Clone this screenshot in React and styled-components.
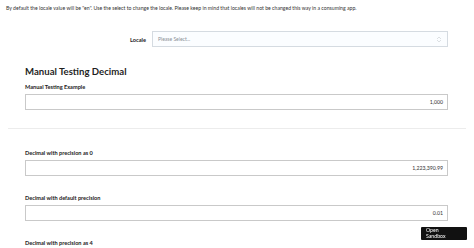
import React from 'react';
import styled, { createGlobalStyle } from 'styled-components';

const GlobalStyle = createGlobalStyle`
  html, body {
    margin: 0;
    padding: 0;
    background: #ffffff;
  }

  body {
    font-family: Lato, 'Open Sans', sans-serif;
    color: #2b2b2b;
  }
`;

const Page = styled.div`
  width: 474px;
  min-height: 248px;
`;

const Intro = styled.p`
  margin: 0;
  padding: 5px 6px 0;
  font-size: 5.15px;
  line-height: 7px;
  color: #333;
`;

const Content = styled.div`
  padding: 0 26px 0 25px;
`;

const LocaleRow = styled.div`
  display: flex;
  justify-content: flex-end;
  align-items: center;
  gap: 6px;
  margin-top: 19px;
`;

const LocaleLabel = styled.label`
  font-size: 5.6px;
  font-weight: 700;
  color: #222;
`;

const Select = styled.div`
  box-sizing: border-box;
  width: 296px;
  height: 16px;
  display: flex;
  align-items: center;
  justify-content: space-between;
  padding: 0 5px;
  border: 1px solid #d5dbe1;
  background: #fbfdff;
  font-size: 5px;
  color: #8a8f96;
`;

const Heading = styled.h2`
  margin: 19px 0 6px;
  font-size: 9.6px;
  line-height: 12px;
  font-weight: 700;
  color: #1f1f1f;
`;

const Field = styled.div`
  margin-top: ${(p) => p.gap || 0}px;
`;

const FieldLabel = styled.label`
  display: block;
  margin-bottom: 4px;
  font-size: 5.6px;
  line-height: 6px;
  font-weight: 700;
  color: #222;
`;

const Input = styled.div`
  box-sizing: border-box;
  height: 16px;
  display: flex;
  align-items: center;
  justify-content: flex-end;
  padding: 0 4px;
  border: 1px solid #c9c9c9;
  background: #fff;
  font-size: 5.2px;
  color: #333;
`;

const Divider = styled.hr`
  margin: 18px 8px 0;
  border: 0;
  border-top: 1px solid #ececec;
`;

const SandboxButton = styled.button`
  position: fixed;
  right: 7px;
  bottom: 8px;
  width: 46px;
  height: 13px;
  padding: 0 5px;
  border: 0;
  border-radius: 1px;
  background: #111;
  color: #fff;
  font-family: Lato, sans-serif;
  font-size: 5.2px;
  line-height: 5.5px;
  text-align: left;
`;

const SortIcon = () => (
  <svg width="6" height="7" viewBox="0 0 6 7">
    <path d="M1 3 L3 1 L5 3 M1 4 L3 6 L5 4" fill="none" stroke="#d4d8dc" strokeWidth="0.8" />
  </svg>
);

const fields = [
  { label: 'Decimal with precision as 0', value: '1,223,390.99', gap: 21 },
  { label: 'Decimal with default precision', value: '0.01', gap: 19 },
  { label: 'Decimal with precision as 4', value: '', gap: 19 },
];

const App = () => (
  <Page>
    <GlobalStyle />
    <Intro>
      By default the locale value will be "en". Use the select to change the locale. Please keep
      in mind that locales will not be changed this way in a consuming app.
    </Intro>

    <Content>
      <LocaleRow>
        <LocaleLabel>Locale</LocaleLabel>
        <Select>
          <span>Please Select...</span>
          <SortIcon />
        </Select>
      </LocaleRow>

      <Heading>Manual Testing Decimal</Heading>
      <Field>
        <FieldLabel>Manual Testing Example</FieldLabel>
        <Input>1,000</Input>
      </Field>
    </Content>

    <Divider />

    <Content>
      {fields.map((f) => (
        <Field key={f.label} gap={f.gap}>
          <FieldLabel>{f.label}</FieldLabel>
          <Input>{f.value}</Input>
        </Field>
      ))}
    </Content>

    <SandboxButton>
      Open
      <br />
      Sandbox
    </SandboxButton>
  </Page>
);

export default App;
